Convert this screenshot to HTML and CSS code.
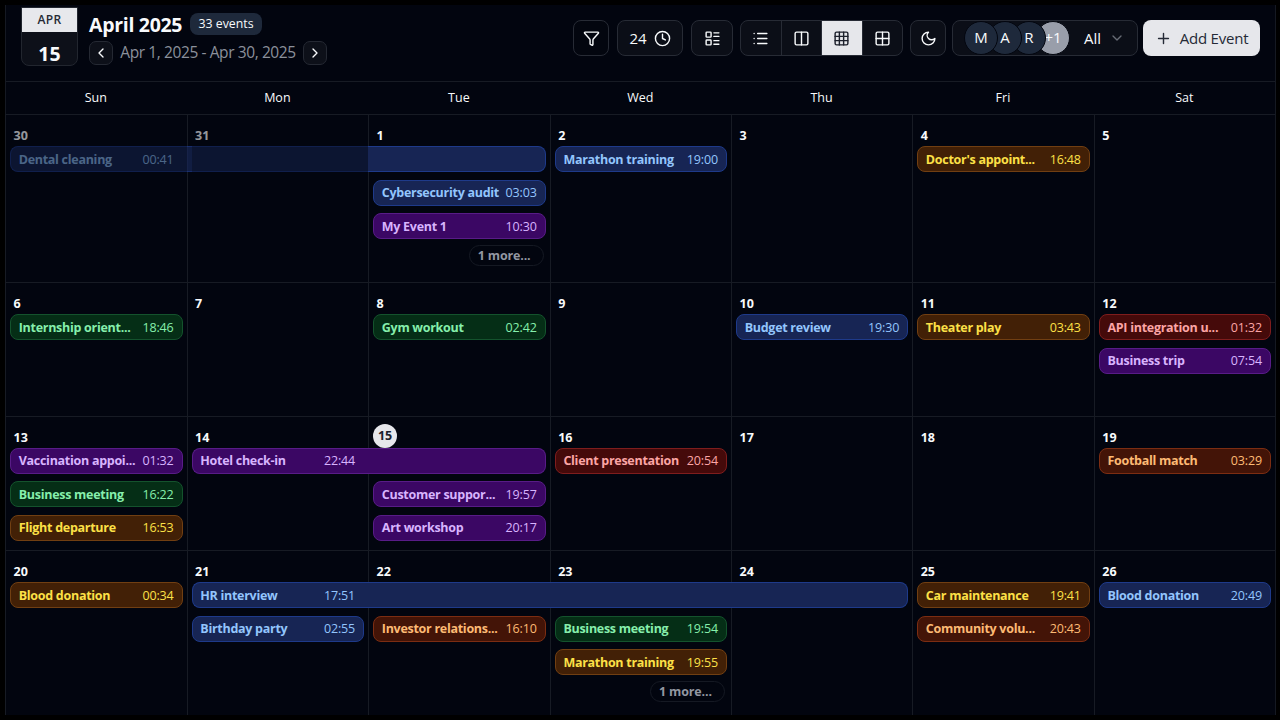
FILE: index.html
```
<!DOCTYPE html>
<html lang="en">
<head>
	<meta charset="UTF-8">
	<title>Calendar</title>
	<link rel="stylesheet" href="styles.css">
</head>
<body>
	<div class="calendar">
		<header class="header">
			<div class="today-card">
				<div class="today-month">APR</div>
				<div class="today-day">15</div>
			</div>
			<div class="heading">
				<div class="title-row">
					<h1 class="title">April 2025</h1>
					<span class="count">33 events</span>
				</div>
				<div class="range-row">
					<button class="nav"><svg class="icon-sm" viewBox="0 0 24 24"><path d="m15 18-6-6 6-6"/></svg></button>
					<span class="range">Apr 1, 2025 - Apr 30, 2025</span>
					<button class="nav"><svg class="icon-sm" viewBox="0 0 24 24"><path d="m9 18 6-6-6-6"/></svg></button>
				</div>
			</div>
			<div class="tools">
				<button class="btn btn-filter"><svg class="icon" viewBox="0 0 24 24"><path d="M21 3H3a1 1 0 0 0-.7 1.7l7.2 8a2 2 0 0 1 .5 1.3v5.500a1 1 0 0 0 .5.9l2 1a1 1 0 0 0 1.500-.9V14a2 2 0 0 1 .5-1.300l7.200-8A1 1 0 0 0 21 3z"/></svg></button>
				<button class="btn btn-clock"><span>24</span><svg class="icon" viewBox="0 0 24 24"><circle cx="12" cy="12" r="10"/><path d="M12 6v6l4 2"/></svg></button>
				<button class="btn btn-layout"><svg class="icon" viewBox="0 0 24 24"><rect x="3" y="3" width="7" height="7" rx="1"/><rect x="3" y="14" width="7" height="7" rx="1"/><path d="M14 4h7M14 9h7M14 15h7M14 20h7"/></svg></button>
				<div class="views">
					<button class="view"><svg class="icon" viewBox="0 0 24 24"><path d="M3 5h.01M3 12h.01M3 19h.01M8 5h13M8 12h13M8 19h13"/></svg></button>
					<button class="view"><svg class="icon" viewBox="0 0 24 24"><rect x="3" y="3" width="18" height="18" rx="2"/><path d="M12 3v18"/></svg></button>
					<button class="view active"><svg class="icon" viewBox="0 0 24 24"><rect x="3" y="3" width="18" height="18" rx="2"/><path d="M3 9h18M3 15h18M9 3v18M15 3v18"/></svg></button>
					<button class="view"><svg class="icon" viewBox="0 0 24 24"><rect x="3" y="3" width="18" height="18" rx="2"/><path d="M3 12h18M12 3v18"/></svg></button>
				</div>
				<button class="btn btn-theme"><svg class="icon" viewBox="0 0 24 24"><path d="M12 3a6 6 0 0 0 9 9 9 9 0 1 1-9-9z"/></svg></button>
				<div class="users">
					<span class="avatar">M</span><span class="avatar">A</span><span class="avatar">R</span><span class="avatar extra">+1</span>
					<span class="all">All</span>
					<svg class="icon-sm chevron" viewBox="0 0 24 24"><path d="m6 9 6 6 6-6"/></svg>
				</div>
				<button class="add"><svg class="icon" viewBox="0 0 24 24"><path d="M5 12h14M12 5v14"/></svg><span>Add Event</span></button>
			</div>
		</header>

		<div class="weekdays">
			<div>Sun</div><div>Mon</div><div>Tue</div><div>Wed</div><div>Thu</div><div>Fri</div><div>Sat</div>
		</div>

		<div class="month">
			<!-- week 1 -->
			<div class="day muted"><span class="num">30</span>
				<div class="event blue first"><b>Dental cleaning</b><time>00:41</time></div>
			</div>
			<div class="day muted"><span class="num">31</span>
				<div class="event blue middle"></div>
			</div>
			<div class="day"><span class="num">1</span>
				<div class="event blue last"></div>
				<div class="event blue"><b>Cybersecurity audit</b><time>03:03</time></div>
				<div class="event purple"><b>My Event 1</b><time>10:30</time></div>
				<span class="more">1 more...</span>
			</div>
			<div class="day"><span class="num">2</span>
				<div class="event blue"><b>Marathon training</b><time>19:00</time></div>
			</div>
			<div class="day"><span class="num">3</span></div>
			<div class="day"><span class="num">4</span>
				<div class="event yellow"><b>Doctor's appoint...</b><time>16:48</time></div>
			</div>
			<div class="day"><span class="num">5</span></div>

			<!-- week 2 -->
			<div class="day"><span class="num">6</span>
				<div class="event green"><b>Internship orient...</b><time>18:46</time></div>
			</div>
			<div class="day"><span class="num">7</span></div>
			<div class="day"><span class="num">8</span>
				<div class="event green"><b>Gym workout</b><time>02:42</time></div>
			</div>
			<div class="day"><span class="num">9</span></div>
			<div class="day"><span class="num">10</span>
				<div class="event blue"><b>Budget review</b><time>19:30</time></div>
			</div>
			<div class="day"><span class="num">11</span>
				<div class="event yellow"><b>Theater play</b><time>03:43</time></div>
			</div>
			<div class="day"><span class="num">12</span>
				<div class="event red"><b>API integration u...</b><time>01:32</time></div>
				<div class="event purple"><b>Business trip</b><time>07:54</time></div>
			</div>

			<!-- week 3 -->
			<div class="day"><span class="num">13</span>
				<div class="event purple"><b>Vaccination appoi...</b><time>01:32</time></div>
				<div class="event green"><b>Business meeting</b><time>16:22</time></div>
				<div class="event yellow"><b>Flight departure</b><time>16:53</time></div>
			</div>
			<div class="day"><span class="num">14</span>
				<div class="event purple first"><b>Hotel check-in</b><time>22:44</time></div>
			</div>
			<div class="day"><span class="num today">15</span>
				<div class="event purple last"></div>
				<div class="event purple"><b>Customer suppor...</b><time>19:57</time></div>
				<div class="event purple"><b>Art workshop</b><time>20:17</time></div>
			</div>
			<div class="day"><span class="num">16</span>
				<div class="event red"><b>Client presentation</b><time>20:54</time></div>
			</div>
			<div class="day"><span class="num">17</span></div>
			<div class="day"><span class="num">18</span></div>
			<div class="day"><span class="num">19</span>
				<div class="event orange"><b>Football match</b><time>03:29</time></div>
			</div>

			<!-- week 4 -->
			<div class="day"><span class="num">20</span>
				<div class="event yellow"><b>Blood donation</b><time>00:34</time></div>
			</div>
			<div class="day"><span class="num">21</span>
				<div class="event blue first"><b>HR interview</b><time>17:51</time></div>
				<div class="event blue"><b>Birthday party</b><time>02:55</time></div>
			</div>
			<div class="day"><span class="num">22</span>
				<div class="event blue middle"></div>
				<div class="event orange"><b>Investor relations...</b><time>16:10</time></div>
			</div>
			<div class="day"><span class="num">23</span>
				<div class="event blue middle"></div>
				<div class="event green"><b>Business meeting</b><time>19:54</time></div>
				<div class="event yellow"><b>Marathon training</b><time>19:55</time></div>
				<span class="more">1 more...</span>
			</div>
			<div class="day"><span class="num">24</span>
				<div class="event blue last"></div>
			</div>
			<div class="day"><span class="num">25</span>
				<div class="event yellow"><b>Car maintenance</b><time>19:41</time></div>
				<div class="event orange"><b>Community volu...</b><time>20:43</time></div>
			</div>
			<div class="day"><span class="num">26</span>
				<div class="event blue"><b>Blood donation</b><time>20:49</time></div>
			</div>
		</div>
	</div>
</body>
</html>
```
FILE: styles.css
```
* {
	box-sizing: border-box;
	margin: 0;
	padding: 0;
}
body {
	height: 720px;
	padding: 5px 4px 5px 5px;
	overflow: hidden;
	background: #000;
	color: #f8fafc;
	font-family: "Open Sans", "Noto Sans", sans-serif;
}
button {
	font: inherit;
	color: inherit;
}
svg {
	display: block;
	flex: none;
	fill: none;
	stroke: currentColor;
	stroke-width: 2;
	stroke-linecap: round;
	stroke-linejoin: round;
}
.icon {
	width: 17px;
	height: 17px;
}
.icon-sm {
	width: 16px;
	height: 16px;
}
.calendar {
	height: 710px;
	background: #02050f;
	border-right: 1px solid #151922;
	overflow: hidden;
}

/* header */
.header {
	display: flex;
	height: 76px;
	padding: 2px 15px 0 15px;
	border-left: 1px solid #151922;
}
.today-card {
	width: 57px;
	height: 59px;
	border: 1px solid #22262f;
	border-radius: 0 0 8px 8px;
	background: #0d1019;
	text-align: center;
	font-weight: 700;
	overflow: hidden;
}
.today-month {
	height: 24px;
	background: #e7e8ec;
	color: #262a34;
	font-size: 12px;
	line-height: 24px;
	font-weight: 600;
	letter-spacing: 0.4px;
}
.today-day {
	font-size: 19.5px;
	line-height: 44px;
}
.heading {
	margin-left: 11px;
	padding-top: 5px;
}
.title-row {
	display: flex;
	align-items: center;
	gap: 8px;
	height: 24px;
}
.title {
	width: 93px;
	font-size: 19.5px;
	font-weight: 700;
	letter-spacing: -0.3px;
	white-space: nowrap;
}
.count {
	width: 72px;
	height: 22px;
	border-radius: 8px;
	background: #1e293b;
	font-size: 12.3px;
	line-height: 22px;
	text-align: center;
}
.range-row {
	display: flex;
	align-items: center;
	margin-top: 5px;
}
.nav {
	display: flex;
	align-items: center;
	justify-content: center;
	width: 24px;
	height: 24px;
	border: 1px solid #252933;
	border-radius: 7px;
	background: #0d1019;
}
.range {
	width: 190px;
	height: 24px;
	text-align: center;
	color: #8b909b;
	font-size: 15.5px;
	letter-spacing: -0.4px;
	line-height: 22px;
	white-space: nowrap;
}
.tools {
	display: flex;
	margin: 13px 0 0 auto;
	height: 36px;
	font-size: 15px;
}
.btn,
.views,
.users {
	display: flex;
	align-items: center;
	justify-content: center;
	height: 36px;
	border: 1px solid #272b35;
	border-radius: 8px;
	background: #0b0e17;
}
.btn-filter {
	width: 36px;
	background: #03060f;
}
.btn-clock {
	width: 66px;
	margin-left: 8px;
	gap: 7px;
	font-weight: 500;
}
.btn-layout {
	width: 42px;
	margin-left: 8px;
}
.views {
	margin-left: 7px;
	width: 163px;
	overflow: hidden;
}
.view {
	display: flex;
	flex: 1;
	align-items: center;
	justify-content: center;
	height: 36px;
	border: 0;
	border-left: 1px solid #272b35;
	background: none;
}
.view:first-child {
	border-left: 0;
}
.view.active {
	background: #e6e7eb;
	color: #1c202b;
}
.btn-theme {
	width: 36px;
	margin-left: 7px;
}
.users {
	width: 186px;
	margin-left: 6px;
	padding: 0 11px;
	justify-content: flex-start;
	font-weight: 500;
}
.avatar {
	z-index: 4;
	flex: none;
	width: 34px;
	height: 34px;
	margin-right: -10px;
	border: 1px solid #03060f;
	border-radius: 50%;
	background: #1e293b;
	line-height: 31px;
	text-align: center;
}
.avatar + .avatar {
	z-index: 3;
}
.avatar + .avatar + .avatar {
	z-index: 2;
}
.avatar.extra.extra {
	z-index: 1;
	background: #999eaa;
}
.all {
	margin-left: 24px;
}
.chevron {
	margin-left: 8px;
	color: #686c76;
}
.add {
	display: flex;
	align-items: center;
	justify-content: center;
	gap: 8px;
	width: 117px;
	height: 36px;
	margin-left: 5px;
	border: 0;
	border-radius: 8px;
	background: #e6e7eb;
	color: #252a36;
	font-size: 15px;
	letter-spacing: -0.2px;
	line-height: 34px;
	white-space: nowrap;
}

/* grid */
.weekdays,
.month {
	display: grid;
	grid-template-columns: 181.6px 181.5px 181.6px 181.3px 181.2px 181.6px 181.2px;
}
.weekdays {
	height: 33px;
	border-top: 1px solid #171b24;
	border-left: 1px solid #151922;
	font-size: 12.5px;
	font-weight: 500;
	line-height: 32px;
	text-align: center;
}
.weekdays div {
	padding-right: 2px;
}
.month {
	grid-template-rows: 168px 133.5px 134.5px 165px;
}
.day {
	display: flex;
	flex-direction: column;
	min-width: 0;
	padding: 0 4px 0 3px;
	border-top: 1px solid #171b24;
	border-left: 1px solid #171b24;
}
.num {
	height: 31px;
	padding: 9px 0 0 4.5px;
	font-size: 12.5px;
	font-weight: 700;
	line-height: 24px;
}
.num.today {
	width: 24px;
	height: 24px;
	margin: 7px 0 0 1px;
	padding: 0;
	border-radius: 50%;
	background: #e6e7eb;
	color: #1c202b;
	text-align: center;
}
.event {
	position: relative;
	display: flex;
	flex: none;
	align-items: center;
	justify-content: space-between;
	height: 26px;
	margin: 0 0 7.7px 1px;
	padding: 0 8px 0 7.7px;
	border: 1px solid;
	border-radius: 8px;
	font-size: 12.5px;
	line-height: 23px;
	white-space: nowrap;
}
.event b {
	font-weight: 700;
	letter-spacing: -0.28px;
}
.event time {
	letter-spacing: -0.15px;
}
.first {
	margin-right: -9px;
	padding-right: 18px;
	border-right: 0;
	border-radius: 8px 0 0 8px;
}
.middle {
	margin-left: -4px;
	margin-right: -4px;
	border-left: 0;
	border-right: 0;
	border-radius: 0;
}
.last {
	margin-left: -4px;
	border-left: 0;
	border-radius: 0 8px 8px 0;
}
.muted .num {
	opacity: 0.6;
}
.muted .event {
	opacity: 0.5;
}
.blue {
	background: #172554;
	border-color: #1e3a8a;
	color: #93c5fd;
}
.purple {
	background: #3b0764;
	border-color: #581c87;
	color: #d8b4fe;
}
.green {
	background: #052e16;
	border-color: #14532d;
	color: #86efac;
}
.yellow {
	background: #422006;
	border-color: #713f12;
	color: #fde047;
}
.red {
	background: #450a0a;
	border-color: #7f1d1d;
	color: #fca5a5;
}
.orange {
	background: #431407;
	border-color: #7c2d12;
	color: #fdba74;
}
.more {
	align-self: flex-end;
	width: 75px;
	height: 21px;
	margin: -2px 2px 0 0;
	padding-left: 8px;
	border: 1px solid #151923;
	border-radius: 11px;
	color: #9297a2;
	font-size: 12.5px;
	font-weight: 700;
	letter-spacing: -0.15px;
	line-height: 19px;
}
```
